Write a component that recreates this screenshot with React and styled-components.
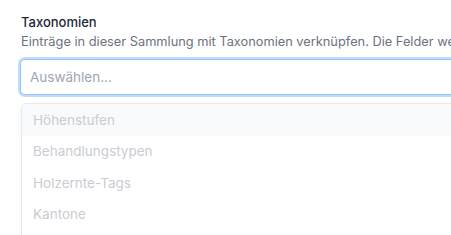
import styled, { createGlobalStyle } from 'styled-components'

const GlobalStyle = createGlobalStyle`
	html, body {
		margin: 0;
		padding: 0;
		background: #ffffff;
		overflow: hidden;
	}
	body {
		font-family: Inter, "Noto Sans", sans-serif;
		-webkit-font-smoothing: antialiased;
	}
`

const Page = styled.div`
	width: 640px;
	height: 235px;
	overflow: hidden;
	padding: 13px 0 0 21px;
	box-sizing: border-box;
`

const Field = styled.div`
	display: flex;
	flex-direction: column;
`

const Label = styled.div`
	font-size: 13px;
	line-height: 18px;
	font-weight: 500;
	color: #1f2937;
`

const Help = styled.div`
	margin-top: 3px;
	font-size: 12.8px;
	line-height: 16px;
	color: #6b7280;
	white-space: nowrap;
`

const Input = styled.div`
	margin: 9px 0 0 -1px;
	height: 36px;
	box-sizing: border-box;
	display: flex;
	align-items: center;
	padding: 0 9px;
	border: 1px solid #93c5fd;
	border-radius: 5px;
	box-shadow: 0 0 0 2px #c3dcfb;
	font-size: 13.5px;
	color: #a0a6b0;
	background: #ffffff;
`

const Menu = styled.ul`
	list-style: none;
	margin: 8px 0 0 0;
	padding: 0;
	border: 1px solid #e7e9ed;
	border-radius: 5px;
	overflow: hidden;
	box-shadow: 0 2px 6px rgba(0, 0, 0, 0.05);
`

const Option = styled.li`
	height: 31.5px;
	display: flex;
	align-items: center;
	padding: 0 11px;
	font-size: 13.5px;
	color: #c9cdd3;
	background: ${({ $active }) => ($active ? '#f9fafb' : '#ffffff')};
`

export default function App() {
	const options = ['Höhenstufen', 'Behandlungstypen', 'Holzernte-Tags', 'Kantone', 'Waldtypen']
	return (
		<Page>
			<GlobalStyle />
			<Field>
				<Label>Taxonomien</Label>
				<Help>Einträge in dieser Sammlung mit Taxonomien verknüpfen. Die Felder werden im Eintrag angezeigt.</Help>
				<Input>Auswählen...</Input>
				<Menu>
					{options.map((text, index) => (
						<Option key={text} $active={index === 0}>
							{text}
						</Option>
					))}
				</Menu>
			</Field>
		</Page>
	)
}
